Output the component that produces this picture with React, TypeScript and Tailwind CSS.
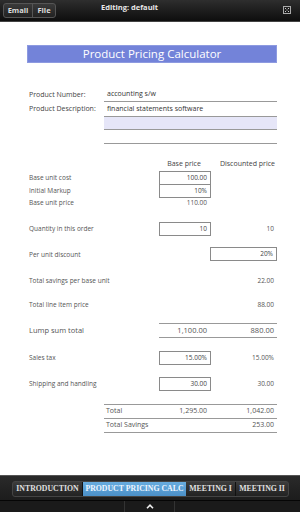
import React from "react";

const font = { fontFamily: '"Open Sans", "DejaVu Sans", sans-serif' };

function Box({ children, w = "w-[52px]" }: { children: React.ReactNode; w?: string }) {
  return (
    <div className={`${w} h-[14px] border border-[#8a8a8a] flex items-center justify-end pr-[3px] text-[6.5px] text-[#444]`}>
      {children}
    </div>
  );
}

export default function App() {
  return (
    <div className="w-[300px] h-[512px] bg-white flex flex-col overflow-hidden" style={font}>
      {/* Top bar */}
      <div className="h-[22px] bg-gradient-to-b from-[#2e2e2e] to-[#0e0e0e] flex items-center px-[3px] border-b border-[#444]">
        <div className="flex h-[15px] rounded-[3px] border border-[#555] bg-gradient-to-b from-[#3a3a3a] to-[#222] text-[7.5px] font-bold text-[#ddd]">
          <div className="w-[29px] flex items-center justify-center border-r border-[#555]">Email</div>
          <div className="w-[22px] flex items-center justify-center">File</div>
        </div>
        <div className="ml-[45px] flex-1 -mt-[5px] text-[7.5px] font-bold text-[#e8e8e8]">
          Editing: default
        </div>
        <svg width="8" height="8" viewBox="0 0 8 8" className="mr-[6px] -mt-[2px]">
          <rect x="0.5" y="0.5" width="7" height="7" fill="none" stroke="#aaa" strokeWidth="1" />
          <path d="M2 2h1v1H2zM5 2h1v1H5zM2 5h1v1H2zM5 5h1v1H5zM3.5 3.5h1v1h-1z" fill="#ccc" />
        </svg>
      </div>

      {/* Main */}
      <div className="flex-1 flex flex-col">
        <div className="ml-[27px] w-[250px] flex flex-col">
          <div className="mt-[23px] h-[18px] bg-[#7383d9] border border-[#8d9ae0] flex items-center justify-center text-[11.5px] text-white">
            Product Pricing Calculator
          </div>

          {/* Product info */}
          <div className="mt-[25px] flex h-[14px]">
            <div className="w-[77px] pl-[2px] text-[7px] text-[#444] flex items-center">Product Number:</div>
            <div className="flex-1 border-b border-[#999] pl-[3px] text-[7px] text-[#333] flex items-center">accounting s/w</div>
          </div>
          <div className="flex h-[15px]">
            <div className="w-[77px] pl-[2px] text-[7px] text-[#444] flex items-center">Product Description:</div>
            <div className="flex-1 border-b border-[#999] pl-[3px] text-[7px] text-[#333] flex items-center">financial statements software</div>
          </div>
          <div className="flex h-[13px]">
            <div className="w-[77px]" />
            <div className="flex-1 bg-[#e6e6f8] border-b border-[#999]" />
          </div>
          <div className="flex h-[14px]">
            <div className="w-[77px]" />
            <div className="flex-1 border-b border-[#999]" />
          </div>

          {/* Headers */}
          <div className="mt-[14px] flex h-[12px] text-[7px] text-[#444] items-center">
            <div className="w-[132px]" />
            <div className="w-[52px] flex justify-center pr-[2px]">Base price</div>
            <div className="flex-1 flex justify-end pr-[2px]">Discounted price</div>
          </div>

          <div className="mt-[1px] flex h-[13px] items-stretch">
            <div className="w-[132px] pl-[2px] text-[6.5px] text-[#555] flex items-center">Base unit cost</div>
            <Box>100.00</Box>
          </div>
          <div className="flex h-[13px] items-stretch">
            <div className="w-[132px] pl-[2px] text-[6.5px] text-[#555] flex items-center">Initial Markup</div>
            <Box>10%</Box>
          </div>
          <div className="flex h-[12px] items-center text-[6.5px] text-[#555]">
            <div className="w-[132px] pl-[2px]">Base unit price</div>
            <div className="w-[52px] flex justify-end pr-[4px]">110.00</div>
          </div>

          <div className="mt-[13px] flex h-[14px] items-stretch text-[6.5px] text-[#555]">
            <div className="w-[132px] pl-[2px] flex items-center">Quantity in this order</div>
            <Box>10</Box>
            <div className="flex-1 flex items-center justify-end pr-[3px]">10</div>
          </div>

          <div className="mt-[11px] flex h-[15px] items-stretch text-[6.5px] text-[#555]">
            <div className="w-[183px] pl-[2px] flex items-center">Per unit discount</div>
            <Box w="w-[67px]">20%</Box>
          </div>

          <div className="mt-[13px] flex h-[12px] items-center text-[6.5px] text-[#555]">
            <div className="flex-1 pl-[2px]">Total savings per base unit</div>
            <div className="pr-[3px]">22.00</div>
          </div>

          <div className="mt-[12px] flex h-[12px] items-center text-[6.5px] text-[#555]">
            <div className="flex-1 pl-[2px]">Total line item price</div>
            <div className="pr-[3px]">88.00</div>
          </div>

          <div className="mt-[12px] flex h-[15px] items-stretch text-[7.5px] text-[#555]">
            <div className="w-[132px] pl-[2px] flex items-center">Lump sum total</div>
            <div className="flex-1 flex border-y border-[#999]">
              <div className="w-[52px] flex items-center justify-end pr-[4px]">1,100.00</div>
              <div className="flex-1 flex items-center justify-end pr-[3px]">880.00</div>
            </div>
          </div>

          <div className="mt-[13px] flex h-[14px] items-stretch text-[6.5px] text-[#555]">
            <div className="w-[132px] pl-[2px] flex items-center">Sales tax</div>
            <Box>15.00%</Box>
            <div className="flex-1 flex items-center justify-end pr-[3px]">15.00%</div>
          </div>

          <div className="mt-[12px] flex h-[14px] items-stretch text-[6.5px] text-[#555]">
            <div className="w-[132px] pl-[2px] flex items-center">Shipping and handling</div>
            <Box>30.00</Box>
            <div className="flex-1 flex items-center justify-end pr-[3px]">30.00</div>
          </div>

          <div className="mt-[13px] flex">
            <div className="w-[77px]" />
            <div className="flex-1 flex flex-col border-t border-[#999] text-[7px] text-[#555]">
              <div className="flex h-[14px] items-center border-b border-[#999]">
                <div className="w-[55px] pl-[2px]">Total</div>
                <div className="w-[52px] flex justify-end pr-[4px]">1,295.00</div>
                <div className="flex-1 flex justify-end pr-[3px]">1,042.00</div>
              </div>
              <div className="flex h-[14px] items-center border-b border-[#999]">
                <div className="flex-1 pl-[2px]">Total Savings</div>
                <div className="pr-[3px]">253.00</div>
              </div>
            </div>
          </div>
        </div>
      </div>

      {/* Bottom bar */}
      <div className="h-[37px] flex flex-col bg-gradient-to-b from-[#2a2a2a] to-[#161616] border-t border-[#555]">
        <div className="h-[24px] flex items-center pl-[12px] pt-[1px]">
          <div className="flex h-[16px] rounded-[3px] border border-[#444] bg-gradient-to-b from-[#3c3c3c] to-[#222] text-[7.8px] font-bold text-[#e0e0e0] overflow-hidden" style={{ fontFamily: '"Liberation Serif", serif' }}>
            <div className="w-[70px] flex items-center justify-center border-r border-[#111]">INTRODUCTION</div>
            <div className="w-[103px] flex items-center justify-center bg-gradient-to-b from-[#68acdf] to-[#4b90c8] text-[#eef6ff]">PRODUCT PRICING CALC</div>
            <div className="w-[50px] flex items-center justify-center border-r border-[#111]">MEETING I</div>
            <div className="w-[52px] flex items-center justify-center">MEETING II</div>
          </div>
        </div>
        <div className="flex-1 flex bg-[#1a1a1a] border-t border-[#050505]">
          <div className="w-[125px] border-r border-[#333]" />
          <div className="w-[50px] border-r border-[#333] flex items-center justify-center">
            <svg width="8" height="5" viewBox="0 0 8 5">
              <path d="M1 4.2L4 1.2L7 4.2" fill="none" stroke="#eee" strokeWidth="1.6" />
            </svg>
          </div>
          <div className="flex-1" />
        </div>
      </div>
    </div>
  );
}
